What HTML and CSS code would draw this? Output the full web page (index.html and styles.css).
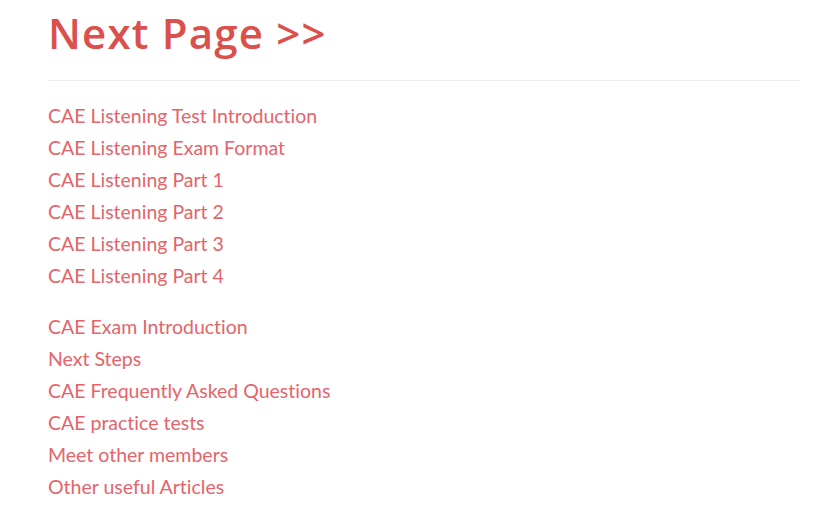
FILE: index.html
```html
<!DOCTYPE html>
<html>
<head>
<meta charset="utf-8">
<link rel="stylesheet" href="styles.css">
</head>
<body>
<main class="content">
  <h1 class="title"><a href="#">Next Page &gt;&gt;</a></h1>
  <hr class="rule">
  <ul class="links">
    <li><a href="#">CAE Listening Test Introduction</a></li>
    <li><a href="#">CAE Listening Exam Format</a></li>
    <li><a href="#">CAE Listening Part 1</a></li>
    <li><a href="#">CAE Listening Part 2</a></li>
    <li><a href="#">CAE Listening Part 3</a></li>
    <li><a href="#">CAE Listening Part 4</a></li>
  </ul>
  <ul class="links">
    <li><a href="#">CAE Exam Introduction</a></li>
    <li><a href="#">Next Steps</a></li>
    <li><a href="#">CAE Frequently Asked Questions</a></li>
    <li><a href="#">CAE practice tests</a></li>
    <li><a href="#">Meet other members</a></li>
    <li><a href="#">Other useful Articles</a></li>
  </ul>
</main>
</body>
</html>
```
FILE: styles.css
```css
html, body {
  margin: 0;
  padding: 0;
  background: #ffffff;
}
body {
  font-family: "Lato", "Liberation Sans", sans-serif;
  font-variant-ligatures: none;
}
.content {
  padding: 6px 30px 0 48px;
}
.title {
  margin: 0;
  font-family: "Open Sans", "Lato", sans-serif;
  font-size: 42px;
  line-height: 54px;
  font-weight: 600;
  letter-spacing: 1.2px;
}
.title a {
  color: #d9504d;
  text-decoration: none;
}
.rule {
  border: 0;
  border-top: 1px solid #eeeeee;
  margin: 20px 0 19px 0;
}
.links {
  list-style: none;
  margin: 0 0 19px 0;
  padding: 0;
}
.links li {
  font-size: 19.5px;
  line-height: 32px;
}
.links a {
  color: #e4646a;
  text-decoration: none;
}
```
